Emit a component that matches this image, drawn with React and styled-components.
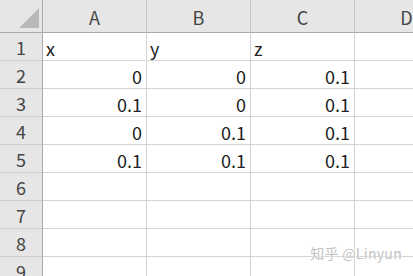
import React from 'react'
import styled, { createGlobalStyle } from 'styled-components'

const GlobalStyle = createGlobalStyle`
  html, body {
    margin: 0;
    padding: 0;
    background: #ffffff;
    overflow: hidden;
  }
`

const columns = ['A', 'B', 'C', 'D']

const rows = [
  [{ v: 'x' }, { v: 'y' }, { v: 'z' }],
  [{ v: '0', n: true }, { v: '0', n: true }, { v: '0.1', n: true }],
  [{ v: '0.1', n: true }, { v: '0', n: true }, { v: '0.1', n: true }],
  [{ v: '0', n: true }, { v: '0.1', n: true }, { v: '0.1', n: true }],
  [{ v: '0.1', n: true }, { v: '0.1', n: true }, { v: '0.1', n: true }],
  [],
  [],
  [],
  [],
]

const App = () => {
  return (
    <Sheet>
      <GlobalStyle />
      <Grid>
        <Corner>
          <svg width="42" height="32" viewBox="0 0 42 32">
            <polygon points="39,8 39,28 19,28" fill="#b9b9b9" />
          </svg>
        </Corner>
        {columns.map(c => (
          <ColHead key={c}>{c}</ColHead>
        ))}
        {rows.map((r, i) => (
          <React.Fragment key={i}>
            <RowHead>{i + 1}</RowHead>
            {columns.map((c, j) => {
              const cell = r[j]
              return (
                <Cell key={c} $num={cell && cell.n}>
                  {cell ? cell.v : ''}
                </Cell>
              )
            })}
          </React.Fragment>
        ))}
      </Grid>
      <Watermark>知乎 @Linyun</Watermark>
    </Sheet>
  )
}

export default App

const Sheet = styled.div`
  position: relative;
  width: 413px;
  height: 276px;
  overflow: hidden;
  background: #ffffff;
  font-family: "Noto Sans CJK SC", "Noto Sans", sans-serif;
`

const Grid = styled.div`
  display: grid;
  grid-template-columns: 43px 104px 104px 104px 104px;
  grid-template-rows: 33px repeat(9, 28px);
`

const Corner = styled.div`
  background: #e6e6e6;
  border-right: 1px solid #a9a9a9;
  border-bottom: 1px solid #a9a9a9;
  svg {
    display: block;
  }
`

const ColHead = styled.div`
  background: #e6e6e6;
  border-bottom: 1px solid #a9a9a9;
  border-right: 1px solid #c9c9c9;
  display: flex;
  align-items: center;
  justify-content: center;
  padding-top: 2px;
  font-size: 18px;
  color: #444444;
`

const RowHead = styled.div`
  background: #e6e6e6;
  border-right: 1px solid #a9a9a9;
  border-bottom: 1px solid #cdcdcd;
  display: flex;
  align-items: center;
  justify-content: center;
  padding-top: 1px;
  font-size: 18px;
  color: #444444;
`

const Cell = styled.div`
  border-right: 1px solid #d4d4d4;
  border-bottom: 1px solid #d4d4d4;
  display: flex;
  align-items: flex-end;
  justify-content: ${p => (p.$num ? 'flex-end' : 'flex-start')};
  padding: 0 4px 0 3px;
  font-size: 18px;
  line-height: 24px;
  color: #222222;
  white-space: nowrap;
  overflow: hidden;
`

const Watermark = styled.div`
  position: absolute;
  right: 11px;
  bottom: 14px;
  font-size: 14px;
  line-height: 18px;
  color: #c2c2c2;
  text-shadow: 0 0 2px #ffffff, 0 0 2px #ffffff;
  letter-spacing: 0.3px;
`
